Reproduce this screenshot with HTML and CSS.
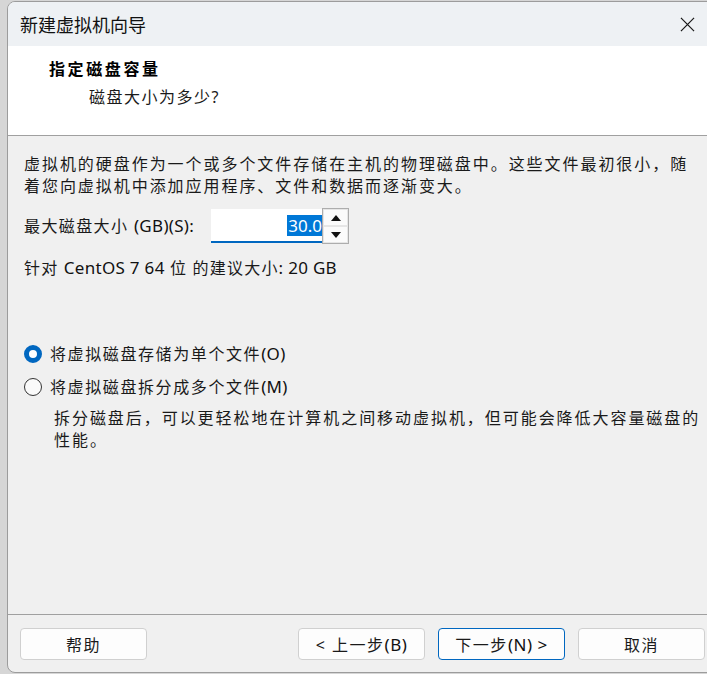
FILE: index.html
```html
<!DOCTYPE html>
<html lang="zh-CN">
<head>
<meta charset="utf-8">
<title>新建虚拟机向导</title>
<link rel="stylesheet" href="styles.css">
</head>
<body>
<div class="window">
  <div class="titlebar">
    <span class="title">新建虚拟机向导</span>
    <svg class="close" width="16" height="16" viewBox="0 0 16 16"><path d="M1 1 L15 15 M15 1 L1 15" stroke="#1a1a1a" stroke-width="1.3" fill="none"/></svg>
  </div>
  <div class="header">
    <div class="h-title">指定磁盘容量</div>
    <div class="h-sub">磁盘大小为多少?</div>
  </div>
  <div class="content">
    <p class="intro">虚拟机的硬盘作为一个或多个文件存储在主机的物理磁盘中。这些文件最初很小，随着您向虚拟机中添加应用程序、文件和数据而逐渐变大。</p>
    <div class="size-row">
      <label class="size-label">最大磁盘大小 <span class="lat">(GB)(S):</span></label>
      <div class="spin">
        <div class="spin-input"><span class="sel">30.0</span></div>
        <div class="spin-btns">
          <div class="spin-btn"><svg width="10" height="6" viewBox="0 0 10 6"><path d="M0 6 L5 0 L10 6 Z" fill="#111"/></svg></div>
          <div class="spin-btn"><svg width="10" height="6" viewBox="0 0 10 6"><path d="M0 0 L10 0 L5 6 Z" fill="#111"/></svg></div>
        </div>
      </div>
    </div>
    <p class="recommend">针对 <span class="lat">CentOS 7 64</span> 位 的建议大小<span class="lat">: 20 GB</span></p>
    <div class="radios">
      <div class="radio-row"><span class="radio checked"></span><span>将虚拟磁盘存储为单个文件<span class="lat">(O)</span></span></div>
      <div class="radio-row"><span class="radio"></span><span>将虚拟磁盘拆分成多个文件<span class="lat">(M)</span></span></div>
      <p class="desc">拆分磁盘后，可以更轻松地在计算机之间移动虚拟机，但可能会降低大容量磁盘的性能。</p>
    </div>
  </div>
  <div class="footer">
    <button class="btn">帮助</button>
    <div class="spacer"></div>
    <button class="btn">&lt; 上一步<span class="lat">(B)</span></button>
    <button class="btn primary">下一步<span class="lat">(N) &gt;</span></button>
    <button class="btn">取消</button>
  </div>
</div>
</body>
</html>
```
FILE: styles.css
```css
html, body {
  margin: 0;
  padding: 0;
  width: 707px;
  height: 674px;
  overflow: hidden;
  background: #d6d6d6;
}
body {
  font-family: "Noto Sans", "Noto Sans CJK SC", sans-serif;
  color: #1a1a1a;
}
.lat {
  font-family: "Noto Sans", sans-serif;
  font-size: 17px;
  letter-spacing: 0.3px;
  color: #111;
}
.window {
  margin: 1px 0 0 7px;
  width: 720px;
  height: 670px;
  border: 1px solid #9c9c9c;
  border-radius: 8px;
  background: #f0f0f0;
  overflow: hidden;
  display: flex;
  flex-direction: column;
}
.titlebar {
  height: 44px;
  background: #eef1f4;
  display: flex;
  align-items: center;
  padding-left: 12px;
  flex-shrink: 0;
}
.title {
  font-family: "Noto Sans CJK SC", sans-serif;
  font-size: 18px;
  color: #111;
  flex: 1;
}
.close {
  margin-right: 33px;
  width: 15px;
  height: 15px;
}
.header {
  height: 90px;
  background: #ffffff;
  border-bottom: 1px solid #a0a0a0;
  padding: 11px 0 0 41px;
  box-sizing: border-box;
  flex-shrink: 0;
}
.h-title {
  font-family: "Noto Sans CJK SC", sans-serif;
  font-weight: 700;
  font-size: 16px;
  letter-spacing: 2.6px;
  line-height: 22px;
  color: #000;
}
.h-sub {
  margin: 7px 0 0 40px;
  font-size: 16px;
  letter-spacing: 1.5px;
  line-height: 22px;
  color: #1a1a1a;
}
.content {
  flex: 1;
  padding: 17px 0 0 16px;
  font-size: 16px;
  line-height: 22px;
}
.intro {
  margin: 0;
  width: 680px;
  letter-spacing: 1.95px;
}
.size-row {
  margin-top: 11px;
  height: 36px;
  display: flex;
  align-items: center;
}
.size-label {
  letter-spacing: 1.4px;
  width: 187px;
}
.spin {
  display: flex;
  height: 36px;
}
.spin-input {
  width: 111px;
  height: 32px;
  margin-top: 1px;
  background: #fff;
  border-bottom: 2px solid #0067c0;
  display: flex;
  align-items: center;
  justify-content: flex-end;
}
.sel {
  background: #0078d7;
  color: #fff;
  font-size: 17px;
  line-height: 21px;
  padding-left: 1px;
}
.spin-btns {
  display: flex;
  flex-direction: column;
  border: 1px solid #adadad;
  width: 25px;
  height: 34px;
}
.spin-btn {
  flex: 1;
  background: #fbfbfb;
  display: flex;
  align-items: center;
  justify-content: center;
  border: 1px solid #e6e6e6;
}
.recommend {
  margin: 13px 0 0;
  letter-spacing: 1.2px;
}
.radios {
  margin-top: 64px;
}
.radio-row {
  display: flex;
  align-items: center;
  height: 22px;
  margin-bottom: 11px;
  letter-spacing: 1.6px;
}
.radio {
  width: 18px;
  height: 18px;
  border-radius: 50%;
  box-sizing: border-box;
  border: 1px solid #333;
  background: #fafafa;
  margin-right: 8px;
  flex-shrink: 0;
}
.radio.checked {
  border: 5px solid #0067c0;
  background: #fff;
}
.desc {
  margin: -2px 0 0 30px;
  width: 660px;
  letter-spacing: 1.95px;
}
.footer {
  border-top: 1px solid #a0a0a0;
  flex-shrink: 0;
  display: flex;
  gap: 13px;
  padding: 13px 0 0 12px;
  box-sizing: border-box;
  height: 58px;
}
.spacer {
  width: 125px;
}
.btn {
  width: 127px;
  height: 32px;
  background: #fdfdfd;
  border: 1px solid #d0d0d0;
  border-radius: 4px;
  font-family: "Noto Sans", "Noto Sans CJK SC", sans-serif;
  font-size: 16px;
  color: #1a1a1a;
  padding: 0;
  letter-spacing: 1.5px;
}
.btn .lat {
  font-size: 17px;
  letter-spacing: 0.5px;
}
.btn.primary {
  border-color: #0067c0;
}
```
